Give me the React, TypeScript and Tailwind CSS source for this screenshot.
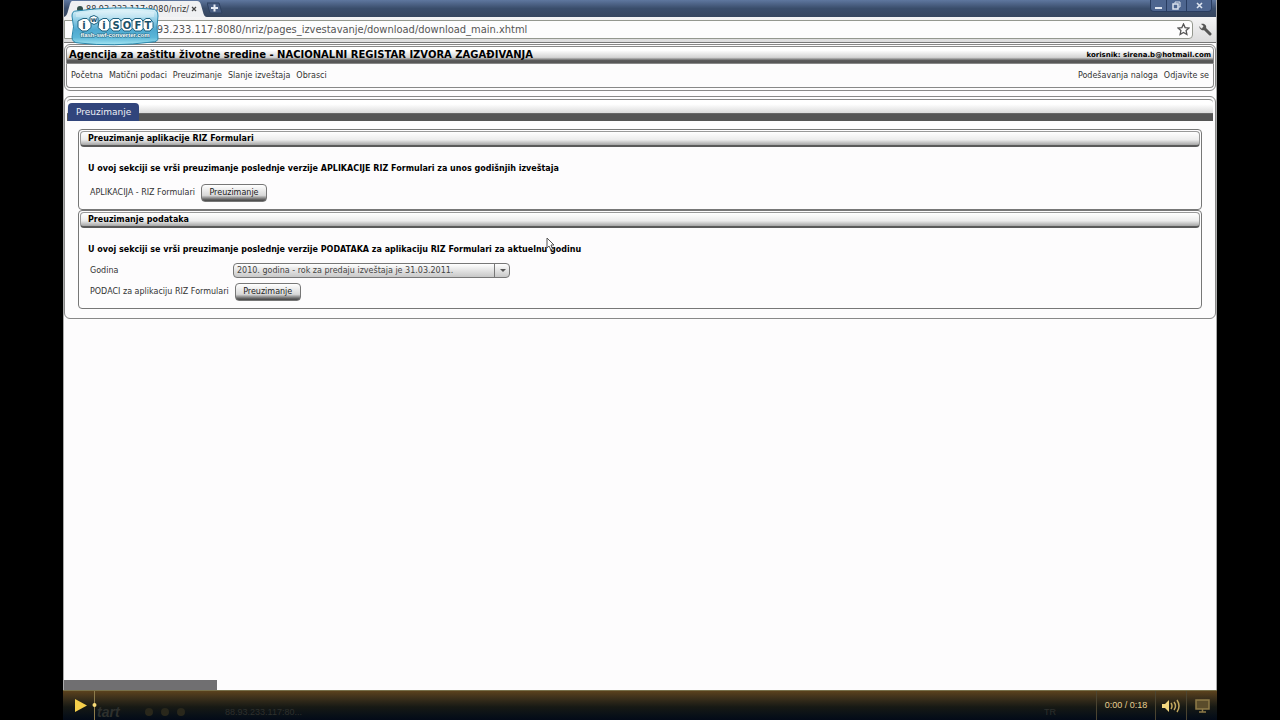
import { useState } from "react";
import type { ReactNode } from "react";

interface NavItem {
  name: string;
  href: string;
}

const mainNav: NavItem[] = [
  { name: "Početna", href: "#pocetna" },
  { name: "Matični podaci", href: "#maticni-podaci" },
  { name: "Preuzimanje", href: "#preuzimanje" },
  { name: "Slanje izveštaja", href: "#slanje" },
  { name: "Obrasci", href: "#obrasci" },
];

const accountNav: NavItem[] = [
  { name: "Podešavanja naloga", href: "#nalog" },
  { name: "Odjavite se", href: "#odjava" },
];

function Logo() {
  return (
    <svg
      width="92"
      height="42"
      viewBox="0 0 92 42"
      className="absolute top-1 left-1 z-10"
      role="img"
      aria-label="iWisoft flash-swf-converter.com"
    >
      <defs>
        <linearGradient id="plate" x1="0" y1="0" x2="0" y2="1">
          <stop offset="0" stopColor="#e4f6fb" />
          <stop offset="0.25" stopColor="#a4d8ec" />
          <stop offset="0.6" stopColor="#4fa9d0" />
          <stop offset="0.8" stopColor="#5bb6d8" />
          <stop offset="1" stopColor="#a6e6f2" />
        </linearGradient>
      </defs>
      <path
        d="M8 7 Q45 2 84 5 Q90 5 90 12 Q88 23 90 34 Q90 38 84 38 Q45 43 11 39 Q4 39 4 33 Q7 23 4 12 Q4 7 8 7Z"
        fill="url(#plate)"
        stroke="#2786ac"
        strokeWidth="1"
      />
      <path d="M8 9 Q45 4 86 8 L86 13 Q45 16 8 13Z" fill="#fff" opacity="0.3" />
      <g fill="#fff" stroke="#1f6280" strokeWidth="1">
        <path d="M10 17l5-2.500h4l4 4v5l-4 3.500h-5l-4-3.500z" />
        <path d="M22 13l4-1.500 4 2v5l-4 2-4-2z" />
        <path d="M31 17l4-2.500h4l3 4v5l-3 3.500h-5l-4-3.500z" />
        <path d="M42 17l3-2.500h6l3 4v5l-3 3.500h-6l-3-3.500z" />
        <path d="M53 17l3-2.500h6l3 4v5l-3 3.500h-6l-3-3.500z" />
        <path d="M64 17l3-2.500h6l3 4v5l-3 3.500h-6l-3-3.500z" />
        <path d="M75 17l3-2.500h4l3 4v5l-3 3.500h-5l-2-3.500z" />
      </g>
      <g fill="#1c5169" fontFamily="DejaVu Sans, sans-serif" fontWeight="700" fontSize="10" textAnchor="middle">
        <text x="16" y="25">i</text>
        <text x="26" y="18" fontSize="7">w</text>
        <text x="36" y="25">i</text>
        <text x="48" y="25">S</text>
        <text x="59" y="25">O</text>
        <text x="70" y="25">F</text>
        <text x="80" y="25">T</text>
      </g>
      <text
        x="47"
        y="33"
        textAnchor="middle"
        fontFamily="Liberation Sans, sans-serif"
        fontWeight="700"
        fontSize="6"
        fill="#fff"
        stroke="#236985"
        strokeWidth="1"
        paintOrder="stroke"
      >
        flash-swf-converter.com
      </text>
    </svg>
  );
}

function WindowControls() {
  return (
    <div className="mr-1 ml-auto flex h-3 rounded-b-sm border border-t-0 border-[#293d61] bg-[#4d658f] text-[#dde4ef]">
      <button aria-label="Minimize" className="flex w-4 items-center justify-center border-r border-[#293d61]">
        <svg width="8" height="8" viewBox="0 0 8 8">
          <path d="M0 6h7" stroke="currentColor" strokeWidth="2" />
        </svg>
      </button>
      <button aria-label="Restore" className="flex w-5 items-center justify-center border-r border-[#293d61]">
        <svg width="9" height="9" viewBox="0 0 9 9" fill="none" stroke="currentColor">
          <path d="M3 2.500V1h5v5H6.500" />
          <path d="M1 3h5v5H1z" strokeWidth="1.500" />
        </svg>
      </button>
      <button aria-label="Close" className="flex w-6 items-center justify-center">
        <svg width="7" height="7" viewBox="0 0 7 7">
          <path d="M1 1l5 5M6 1L1 6" stroke="currentColor" strokeWidth="1.600" />
        </svg>
      </button>
    </div>
  );
}

function BrowserChrome() {
  return (
    <div className="relative font-['DejaVu_Sans_Condensed','DejaVu_Sans',sans-serif]">
      <div className="flex h-[17px] bg-linear-to-b from-[#5f779f] via-[#3a4d6b] to-[#36465f]">
        <svg width="8" height="17" viewBox="0 0 8 17">
          <path d="M0 17Q3 16 4 11L6 4Q7 1 8 1V17Z" fill="#eff0f2" />
        </svg>
        <div className="mt-px flex items-center bg-[#eff0f2] pl-1 text-[9px] leading-4 text-[#333]">
          <svg width="8" height="9" viewBox="0 0 8 9" className="mr-0.5">
            <circle cx="4" cy="4" r="3" fill="#33504c" />
          </svg>
          <span className="whitespace-nowrap">88.93.233.117:8080/nriz/</span>
          <button aria-label="Close tab" className="ml-0.5">
            <svg width="6" height="6" viewBox="0 0 6 6">
              <path d="M1 1l4 4M5 1L1 5" stroke="#444" strokeWidth="1.200" />
            </svg>
          </button>
        </div>
        <svg width="10" height="17" viewBox="0 0 10 17">
          <path d="M0 1Q3 1 4 5L6 12Q7 17 10 17H0Z" fill="#eff0f2" />
        </svg>
        <button aria-label="New tab" className="flex h-4 items-center">
          <svg width="16" height="12" viewBox="0 0 16 12">
            <path d="M0 1H12L15 11H3Z" fill="#485d82" stroke="#2f4261" />
            <path d="M7.500 2.500v7M4 6h7" stroke="#e6ebf3" strokeWidth="2" />
          </svg>
        </button>
        <WindowControls />
      </div>
      <div className="flex h-[25px] items-center bg-linear-to-b from-[#f4f4f5] to-[#dcdcdd]">
        <div className="flex h-[19px] flex-1 items-center rounded-r-sm border border-[#94988f] bg-[#fdfdfd] pr-0.5">
          <input
            aria-label="Address"
            defaultValue="88.93.233.117:8080/nriz/pages_izvestavanje/download/download_main.xhtml"
            className="ml-[76px] min-w-0 flex-1 bg-transparent text-[11px] leading-4 text-[#555] outline-none"
          />
          <button aria-label="Bookmark">
            <svg width="13" height="13" viewBox="0 0 13 13">
              <path
                d="M6.500 1l1.600 3.600 3.900.4-2.900 2.600.8 3.900-3.400-2-3.400 2 .8-3.900L1 5l3.900-.4z"
                fill="none"
                stroke="#555"
                strokeWidth="1.300"
              />
            </svg>
          </button>
        </div>
        <button aria-label="Settings" className="mr-1 ml-1.5">
          <svg width="13" height="13" viewBox="0 0 13 13">
            <path d="M5 5l6 6" stroke="#555" strokeWidth="3" strokeLinecap="round" />
            <path d="M2 1l2.500 2-.5 2-2 .5L.5 3C0 6 3 8 5.500 7L7 5.500C8 3 6 0 2 1z" fill="#555" />
          </svg>
        </button>
      </div>
      <Logo />
    </div>
  );
}

function NavLinks({ items }: { items: NavItem[] }) {
  return (
    <ul className="flex gap-1.5">
      {items.map((item) => (
        <li key={item.name}>
          <a href={item.href}>{item.name}</a>
        </li>
      ))}
    </ul>
  );
}

function Header() {
  return (
    <header className="mt-px rounded-md border border-[#888] p-px pb-0.5">
      <div className="flex h-[18px] items-center justify-between rounded-t-sm border border-[#888] bg-linear-to-b from-white from-20% via-[#d4d4d4] via-65% to-[#585858] to-85% px-0.5 font-bold text-black">
        <h1 className="text-[10px] leading-4">
          Agencija za zaštitu životne sredine - NACIONALNI REGISTAR IZVORA ZAGAĐIVANJA
        </h1>
        <span className="text-[7px]">korisnik: sirena.b@hotmail.com</span>
      </div>
      <nav className="flex h-6 items-center justify-between rounded-b-sm border border-t-0 border-[#888] px-1">
        <NavLinks items={mainNav} />
        <NavLinks items={accountNav} />
      </nav>
    </header>
  );
}

function Section({ title, note, children }: { title: string; note: string; children: ReactNode }) {
  return (
    <section className="rounded-sm border border-[#777] p-px pb-[7px]">
      <h2 className="h-4 rounded-sm border border-b-2 border-[#999] border-b-[#5a5a5a] bg-linear-to-b from-white via-[#ececec] via-60% to-[#a5a5a5] px-[7px] leading-[14px] font-bold text-black">
        {title}
      </h2>
      <p className="mt-4 px-2 leading-3 font-bold text-black">{note}</p>
      {children}
    </section>
  );
}

function DownloadButton() {
  return (
    <button className="h-[18px] w-[66px] rounded-sm border border-[#777] bg-linear-to-b from-white via-[#d8d8d8] via-65% to-[#505050] to-95% text-center leading-4 text-[#222]">
      Preuzimanje
    </button>
  );
}

function DownloadPanel() {
  return (
    <main className="mt-[5px] rounded-md border border-[#888] p-0.5">
      <div className="flex h-[22px] items-end rounded-t-sm border-t border-[#888] bg-linear-to-b from-white from-20% via-[#ddd] via-60% to-[#555] to-65% pl-px">
        <button className="h-[18px] rounded-t-sm bg-[#31457c] px-2 text-[9px] leading-4 text-[#eef0f6]">
          Preuzimanje
        </button>
      </div>
      <div className="px-[11px] pt-2 pb-[7px]">
        <Section
          title="Preuzimanje aplikacije RIZ Formulari"
          note="U ovoj sekciji se vrši preuzimanje poslednje verzije APLIKACIJE RIZ Formulari za unos godišnjih izveštaja"
        >
          <div className="mt-[9px] flex items-center gap-1.5 pl-2.5">
            <span>APLIKACIJA - RIZ Formulari</span>
            <DownloadButton />
          </div>
        </Section>
        <Section
          title="Preuzimanje podataka"
          note="U ovoj sekciji se vrši preuzimanje poslednje verzije PODATAKA za aplikaciju RIZ Formulari za aktuelnu godinu"
        >
          <div className="mt-[7px] flex items-center pl-2.5">
            <label htmlFor="godina" className="w-[143px]">
              Godina
            </label>
            <div className="relative">
              <select
                id="godina"
                className="block h-[15px] w-[277px] appearance-none rounded-sm border border-[#777] bg-linear-to-b from-white to-[#c8c8c8] pl-[3px] leading-3 text-[#444]"
              >
                <option>2010. godina - rok za predaju izveštaja je 31.03.2011.</option>
              </select>
              <span className="pointer-events-none absolute inset-y-0 right-0 flex w-4 items-center justify-center border-l border-[#777]">
                <svg width="6" height="4" viewBox="0 0 6 4">
                  <path d="M0 0h6L3 3z" fill="#555" />
                </svg>
              </span>
            </div>
          </div>
          <div className="mt-[5px] flex items-center gap-1.5 pl-2.5">
            <span>PODACI za aplikaciju RIZ Formulari</span>
            <DownloadButton />
          </div>
        </Section>
      </div>
    </main>
  );
}

function PlayerBar() {
  const [playing, setPlaying] = useState(false);

  return (
    <div className="flex h-[30px] items-stretch border-t border-[#77704b] bg-linear-to-b from-[#5b421d] via-[#171914] via-55% to-[#030a18] font-['Liberation_Sans',sans-serif]">
      <button
        aria-label={playing ? "Pause" : "Play"}
        onClick={() => setPlaying(!playing)}
        className="flex w-[29px] items-center justify-end pr-px"
      >
        <svg width="16" height="13" viewBox="0 0 16 13">
          <path d="M0 0L12 6.500 0 13z" fill="#f6cf4b" />
        </svg>
      </button>
      <svg width="5" height="29" viewBox="0 0 5 29">
        <path d="M2.500 0v29" stroke="#8d7b4b" />
        <circle cx="2.500" cy="14" r="2" fill="#f8db77" />
      </svg>
      {/* taskbar showing through the controls */}
      <div className="flex flex-1 items-end overflow-hidden pb-0.5 text-[9px] leading-3 text-[#2e302d]">
        <span className="w-12 text-[14px] font-bold italic">tart</span>
        <span className="flex w-[68px] gap-2 pb-0.5">
          <i className="size-2 rounded-full bg-[#29271b]" />
          <i className="size-2 rounded-full bg-[#29271b]" />
          <i className="size-2 rounded-full bg-[#29271b]" />
        </span>
        <span className="pl-3">88.93.233.117:80...</span>
        <span className="ml-auto pr-10">TR</span>
      </div>
      <div className="flex w-[59px] items-center justify-center border-l border-[#4b4431] text-[9px] text-[#e6cf91]">
        0:00 / 0:18
      </div>
      <button aria-label="Volume" className="flex w-[31px] items-center justify-center border-l border-[#4b4431]">
        <svg width="19" height="14" viewBox="0 0 19 14">
          <path d="M0 5h3l4-4v12L3 9H0z" fill="#f3d77f" />
          <path d="M9 4q2 3 0 6M12 3q3 4 0 8M15 1q4 6 0 12" fill="none" stroke="#c3a85f" strokeWidth="1.500" />
        </svg>
      </button>
      <button aria-label="Full screen" className="flex w-[31px] items-center justify-center border-l border-[#4b4431]">
        <svg width="15" height="14" viewBox="0 0 15 14">
          <path d="M1 1h13v9H1z" fill="#5a4c2b" stroke="#8f7b48" strokeWidth="1.500" />
          <path d="M7.500 10v3M4 13h7" stroke="#8f7b48" strokeWidth="1.500" />
        </svg>
      </button>
    </div>
  );
}

export default function App() {
  return (
    <div className="flex min-h-screen flex-col bg-black px-[63px]">
      <div className="relative flex flex-1 flex-col border-x border-[#aaa] bg-[#fdfcfd] font-['DejaVu_Sans',sans-serif] text-[8px] leading-3 text-[#333]">
        <BrowserChrome />
        <div className="flex-1 border-t border-[#777]">
          <Header />
          <DownloadPanel />
        </div>
        <svg width="9" height="14" viewBox="0 0 9 14" className="absolute top-[237px] left-[482px]">
          <path d="M1 1v10l2-2 2 4 1.500-1-1.500-4h3z" fill="#fff" stroke="#555" />
        </svg>
        <div className="h-2.5 w-[153px] bg-[#706f71]" />
      </div>
      <PlayerBar />
    </div>
  );
}
